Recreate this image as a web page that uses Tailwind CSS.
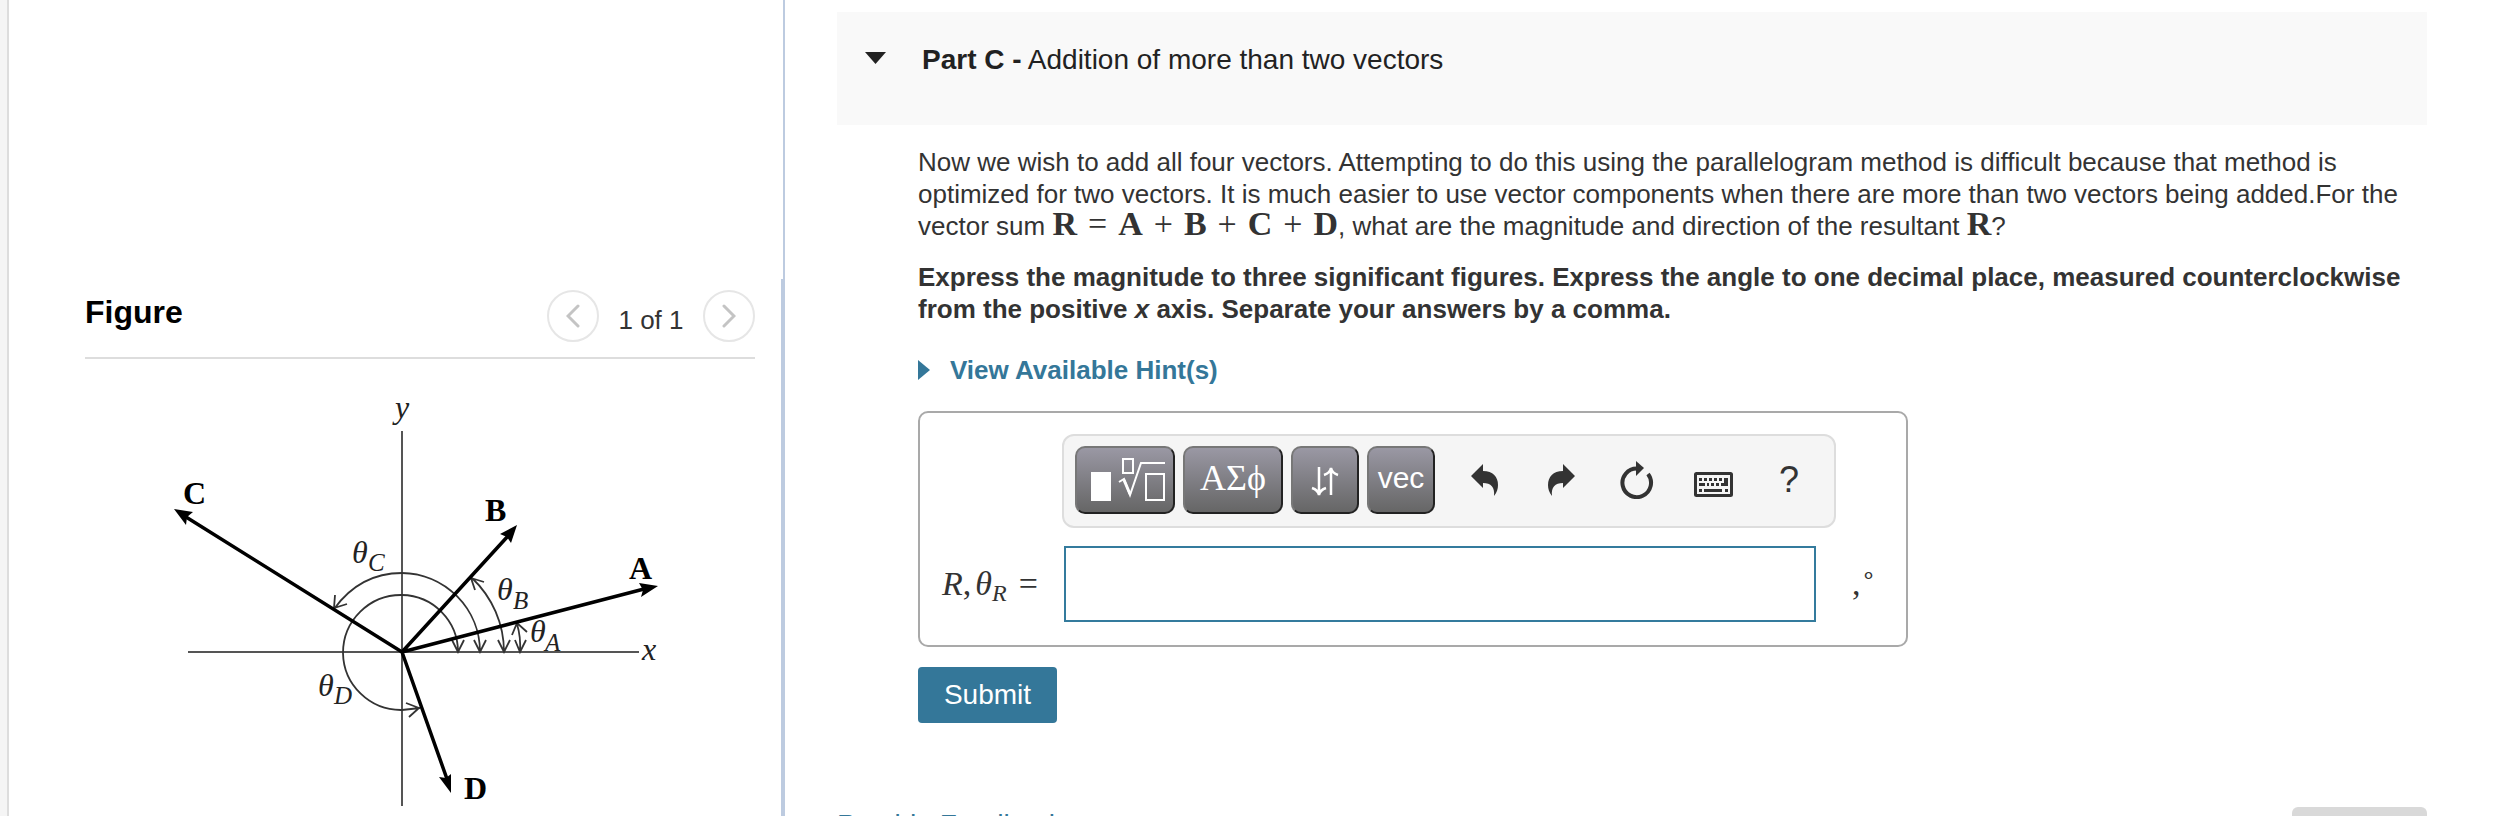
<!DOCTYPE html>
<html lang="en">
<head>
  <meta charset="UTF-8" />
  <meta name="viewport" content="width=device-width, initial-scale=1.0" />
  <title>Part C - Addition of more than two vectors</title>
  <script src="https://cdn.jsdelivr.net/npm/@tailwindcss/browser@4"></script>
</head>
<body class="flex h-screen overflow-hidden bg-white font-['Liberation_Sans',Arial,sans-serif] text-[#333]">

  <!-- Figure pane -->
  <aside class="flex w-[785px] shrink-0">
    <div class="w-[9px] shrink-0 border-r-2 border-[#ddd] bg-[#f5f5f5]"></div>
    <div class="flex flex-1 flex-col">
      <div class="h-[279px] shrink-0 border-r-2 border-[#bdcbe0]"></div>
      <div class="flex-1 border-r-4 border-[#bdcbe0] pr-[26px] pl-[76px]">
        <header class="flex items-center border-b-2 border-[#ddd] pt-[11px] pb-[15px]">
          <h2 class="mr-auto pb-2 text-[32px] leading-10 font-bold text-black">Figure</h2>
          <button type="button" aria-label="Previous figure" class="flex size-[52px] items-center justify-center rounded-full border-2 border-[#e6e6e6]">
            <svg width="14" height="24" viewBox="0 0 14 24" fill="none" stroke="#c4c4c4" stroke-width="3" stroke-linecap="round"><path d="M12 2 2 12l10 10" /></svg>
          </button>
          <span class="w-[104px] pt-2 text-center text-[26px] leading-8">1 of 1</span>
          <button type="button" aria-label="Next figure" class="flex size-[52px] items-center justify-center rounded-full border-2 border-[#e6e6e6]">
            <svg width="14" height="24" viewBox="0 0 14 24" fill="none" stroke="#c4c4c4" stroke-width="3" stroke-linecap="round"><path d="m2 2 10 10L2 22" /></svg>
          </button>
        </header>

        <svg class="mt-[22px] ml-[65px]" width="540" height="436" viewBox="0 0 540 436" role="img" aria-label="Vectors A, B, C and D drawn from the origin">
          <g stroke="#555" stroke-width="2">
            <path d="M252 50V425M38 271H489" />
          </g>
          <!-- angle arcs -->
          <g fill="none" stroke="#333" stroke-width="1.800">
            <path d="M370 271Q371 256 367 243M362 254l5-12 10 9M365 259l5 12 6-12" />
            <path d="M354 271A102 102 0 0 0 322 197M325 209l-4-12 13 4M348 259l6 12 6-12" />
            <path d="M330 271A79 79 0 0 0 252 192Q210 192 184 228M185 214l-1 13 13-4M324 259l6 12 6-12" />
            <path d="M308 271A57 57 0 0 0 252 214A58 58 0 0 0 193 272A58 58 0 0 0 252 329L270 327M256 322l13 5-10 9M302 259l6 12 6-12" />
          </g>
          <!-- vectors -->
          <g stroke="#000" stroke-width="3.500">
            <path d="M252 271 36 136M252 271 358 155M252 271 494 208M252 271 297 398" />
          </g>
          <path d="m24 128 19 3-6 5-1 8zM367 144l-6 18-4-6-7-3zM508 205l-17 11 2-7-4-7zM301 412l-12-16 7 1 5-4z" />
          <g class="font-['Liberation_Serif',serif] text-[32px]">
            <g class="font-bold">
              <text x="33" y="123">C</text>
              <text x="335" y="140">B</text>
              <text x="479" y="198">A</text>
              <text x="314" y="418">D</text>
            </g>
            <g class="italic" fill="#222">
              <text x="245" y="37">y</text>
              <text x="492" y="279">x</text>
              <text x="202" y="182">θ</text>
              <text x="347" y="219">θ</text>
              <text x="380" y="261">θ</text>
              <text x="168" y="315">θ</text>
            </g>
          </g>
          <g class="font-['Liberation_Serif',serif] text-[25px] italic" fill="#222">
            <text x="218" y="190">C</text>
            <text x="363" y="228">B</text>
            <text x="395" y="270">A</text>
            <text x="184" y="323">D</text>
          </g>
        </svg>
      </div>
    </div>
  </aside>

  <!-- Question pane -->
  <main class="flex-1 pt-3 pr-[69px] pl-[52px]">
    <header class="flex h-[113px] items-start bg-[#f9f9f9] pt-8 pl-7">
      <button type="button" aria-label="Collapse Part C" class="mt-2 mr-9">
        <svg width="21" height="12" viewBox="0 0 21 12" fill="#222"><path d="M0 0h21L10.500 12z" /></svg>
      </button>
      <h1 class="text-[28px] leading-8 text-[#222]"><b>Part C -</b> Addition of more than two vectors</h1>
    </header>

    <section class="pt-[21px] pl-[81px] text-[26px] leading-8">
      <p>
        Now we wish to add all four vectors. Attempting to do this using the parallelogram method is difficult because that method is<br />
        optimized for two vectors. It is much easier to use vector components when there are more than two vectors being added.For the<br />
        vector sum
        <span class="inline-flex items-baseline gap-[11px] font-['Liberation_Serif',serif] text-[34px] leading-0"><b>R</b><span>=</span><b>A</b><span>+</span><b>B</b><span>+</span><b>C</b><span>+</span><b>D</b></span>, what are the magnitude and direction of the resultant
        <b class="font-['Liberation_Serif',serif] text-[34px] leading-0">R</b>?
      </p>
      <p class="mt-[19px] font-bold">
        Express the magnitude to three significant figures. Express the angle to one decimal place, measured counterclockwise<br />
        from the positive <i>x</i> axis. Separate your answers by a comma.
      </p>

      <a href="#" class="mt-[29px] inline-flex items-center font-bold text-[#347799]">
        <svg class="mr-5" width="12" height="20" viewBox="0 0 12 20" fill="currentColor"><path d="M0 0 12 10 0 20z" /></svg>
        View Available Hint(s)
      </a>

      <form>
        <div class="mt-6 w-[990px] rounded-[10px] border-2 border-[#a9a9a9] pt-[21px] pb-[23px] pl-[22px]">
          <div class="ml-[120px] flex h-[94px] w-[774px] items-center rounded-xl border-2 border-[#ddd] bg-[#f5f5f5] px-[11px] pb-[2px]">
            <div class="flex gap-2 text-[30px] text-white">
              <button type="button" aria-label="Templates" class="h-[68px] w-[100px] rounded-[10px] border-2 border-t-[#777] border-r-[#222] border-b-[#222] border-l-[#777] bg-linear-to-b from-[#9a98a4] to-[#666]">
                <svg width="96" height="64" viewBox="2 2 96 64" fill="none" stroke="#fff" stroke-width="2">
                  <path fill="#fff" stroke="none" d="M16 26h20v29H16z" />
                  <path d="M48 13h10v14H48zM71 28h18v26H71zM44 36l5-3 6 16L66 17h24" />
                  <path stroke-width="3" d="m49 34 6 14" />
                </svg>
              </button>
              <button type="button" aria-label="Symbols" class="h-[68px] w-[100px] rounded-[10px] border-2 border-t-[#777] border-r-[#222] border-b-[#222] border-l-[#777] bg-linear-to-b from-[#9a98a4] to-[#666] pb-1 font-['Liberation_Serif',serif] text-[36px]">ΑΣϕ</button>
              <button type="button" aria-label="Arrows" class="h-[68px] w-[68px] rounded-[10px] border-2 border-t-[#777] border-r-[#222] border-b-[#222] border-l-[#777] bg-linear-to-b from-[#9a98a4] to-[#666]">
                <svg width="64" height="64" viewBox="2 2 64 64" fill="none" stroke="#fff" stroke-width="2.500"><path d="M28 21v27M40 49V22M21 42q6 2 7 7 1-5 7-7M33 29q6-2 7-7 1 5 7 7" /></svg>
              </button>
              <button type="button" class="h-[68px] w-[68px] rounded-[10px] border-2 border-t-[#777] border-r-[#222] border-b-[#222] border-l-[#777] bg-linear-to-b from-[#9a98a4] to-[#666] pb-1">vec</button>
            </div>
            <div class="ml-3 flex h-[68px]">
              <button type="button" aria-label="Undo" class="flex w-[76px] items-center justify-center">
                <svg width="28" height="32" viewBox="0 0 28 32" fill="#333"><path d="M0 12 12 0v7C22 7 27 13 27 21c0 4-1 7-4 11 1-9-3-13-11-13v5z" /></svg>
              </button>
              <button type="button" aria-label="Redo" class="flex w-[76px] items-center justify-center">
                <svg width="28" height="32" viewBox="0 0 28 32" fill="#333"><path d="M28 12 16 0v7C6 7 1 13 1 21c0 4 1 7 4 11-1-9 3-13 11-13v5z" /></svg>
              </button>
              <button type="button" aria-label="Reset" class="flex w-[76px] items-center justify-center">
                <svg width="34" height="38" viewBox="0 0 34 38"><path d="M17 7.500A14.300 14.300 0 1 0 28 13" fill="none" stroke="#333" stroke-width="4" /><path d="m16 0 8 7-8 8z" fill="#333" /></svg>
              </button>
              <button type="button" aria-label="Keyboard shortcuts" class="flex w-[76px] items-center justify-center pt-2">
                <svg width="39" height="25" viewBox="0 0 39 25" fill="none" stroke="#333">
                  <rect x="1.500" y="1.500" width="36" height="22" rx="1" stroke-width="3" />
                  <path stroke-width="3" stroke-dasharray="3 2" d="M5 7.500h25" />
                  <path stroke-width="3" d="M5 12.500h6M13 12.500h2M17 12.500h3M22 12.500h3M27 12.500h7M5 18.500h3M10 18.500h18M31 18.500h3" />
                  <path stroke-width="4" d="M32 6v8" />
                </svg>
              </button>
              <button type="button" aria-label="Help" class="flex w-[76px] items-center justify-center text-[36px]">?</button>
            </div>
          </div>

          <div class="mt-[18px] flex items-center">
            <label for="answer" class="flex w-[122px] items-baseline font-['Liberation_Serif',serif] text-[34px] leading-none"><i>R</i>,<i class="ml-1">θ<sub class="text-2xl leading-none">R</sub></i><span class="ml-3">=</span></label>
            <input id="answer" type="text" class="h-[76px] w-[752px] border-2 border-[#347b9d] bg-white px-3" />
            <span class="ml-9 font-['Liberation_Serif',serif] text-[34px] leading-none">,<sup class="text-2xl leading-none">∘</sup></span>
          </div>
        </div>

        <button type="submit" class="mt-5 h-14 w-[139px] rounded bg-[#347799] text-[28px] text-white">Submit</button>
      </form>
    </section>

    <footer class="mt-[84px] flex items-start justify-between text-[28px] leading-8">
      <a href="#" class="pt-[2px] text-[#347799]">Provide Feedback</a>
      <button type="button" class="h-14 w-[135px] rounded-md bg-[#d9d9d9] text-white">Next</button>
    </footer>
  </main>
</body>
</html>
